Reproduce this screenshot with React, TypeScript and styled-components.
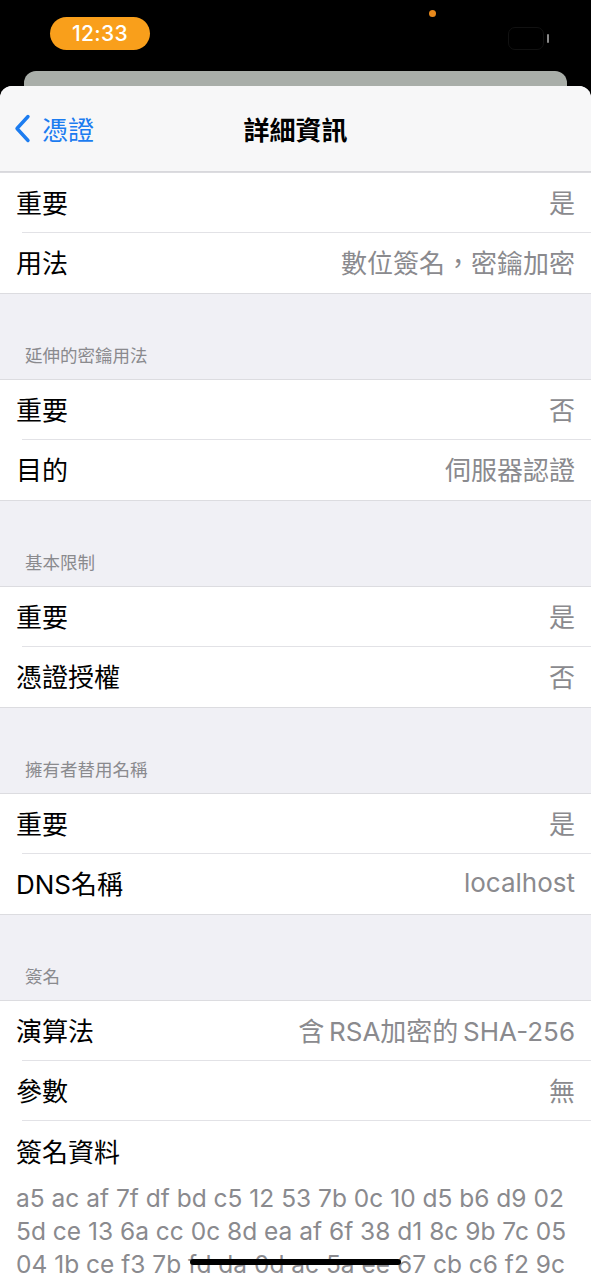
import React from 'react';
import styled, { createGlobalStyle } from 'styled-components';

const GlobalStyle = createGlobalStyle`
  html, body {
    margin: 0;
    padding: 0;
    background: #000;
  }
  body {
    font-family: Inter, 'Noto Sans CJK TC', 'Noto Sans', sans-serif;
    -webkit-font-smoothing: antialiased;
  }
`;

const Screen = styled.div`
  width: 591px;
  height: 1279px;
  overflow: hidden;
  position: relative;
  background: #000;
`;

const StatusBar = styled.div`
  height: 71px;
  position: relative;
  display: flex;
  align-items: flex-start;
  padding: 17px 0 0 50px;
  box-sizing: border-box;
`;

const TimePill = styled.div`
  width: 100px;
  height: 33px;
  border-radius: 17px;
  background: #f99f1b;
  color: #fff;
  font-size: 21px;
  font-weight: 500;
  display: flex;
  align-items: center;
  justify-content: center;
  letter-spacing: 0.3px;
`;

const PrivacyDot = styled.div`
  position: absolute;
  left: 429px;
  top: 10px;
  width: 7px;
  height: 7px;
  border-radius: 50%;
  background: #e8891c;
`;

const Battery = styled.div`
  position: absolute;
  left: 508px;
  top: 27px;
  width: 34px;
  height: 21px;
  border-radius: 7px;
  border: 1px solid #111;
  &::after {
    content: '';
    position: absolute;
    right: -6px;
    top: 6px;
    width: 2px;
    height: 9px;
    border-radius: 1px;
    background: #8a8a8a;
  }
`;

const BackCard = styled.div`
  margin: 0 24px;
  height: 15px;
  background: #a9aea9;
  border-radius: 12px 12px 0 0;
`;

const Sheet = styled.div`
  background: #f0f0f5;
  border-radius: 12px 12px 0 0;
  overflow: hidden;
  height: 1193px;
`;

const NavBar = styled.div`
  height: 86px;
  background: #f7f7f8;
  border-bottom: 1px solid #d8d8dc;
  display: grid;
  grid-template-columns: 1fr auto 1fr;
  align-items: center;
  box-sizing: border-box;
`;

const BackButton = styled.div`
  display: flex;
  align-items: center;
  gap: 11px;
  padding-left: 14px;
  color: #1c7cf0;
  font-size: 26px;
`;

const Title = styled.div`
  font-size: 26px;
  font-weight: 700;
  color: #000;
`;

const Group = styled.div`
  background: #fff;
  border-top: 1px solid #dcdce0;
  border-bottom: 1px solid #dcdce0;
  &:first-of-type {
    border-top: none;
  }
`;

const SectionHeader = styled.div`
  height: 85px;
  box-sizing: border-box;
  padding: 0 0 12px 25px;
  display: flex;
  align-items: flex-end;
  font-size: 17.5px;
  color: #8a8a8e;
`;

const Row = styled.div<{ $last?: boolean }>`
  height: 60px;
  box-sizing: border-box;
  margin-left: 22px;
  padding-right: 16px;
  padding-bottom: 3px;
  display: flex;
  align-items: center;
  justify-content: space-between;
  border-bottom: ${(p) => (p.$last ? 'none' : '1px solid #e2e2e6')};
`;

const Label = styled.div<{ $flush?: boolean }>`
  margin-left: ${(p) => (p.$flush ? '0' : '-6px')};
  font-size: 26px;
  color: #000;
`;

const Value = styled.div`
  font-size: 26px;
  color: #8a8a8e;
`;

const DataRow = styled.div`
  padding: 11px 16px 0 16px;
`;

const DataBlock = styled.div`
  padding: 13px 0 0 0;
  font-size: 24.5px;
  line-height: 33px;
  color: #8a8a8e;
`;

const HomeIndicator = styled.div`
  position: absolute;
  left: 190px;
  bottom: 14px;
  width: 211px;
  height: 6px;
  border-radius: 3px;
  background: #000;
`;

type Item = { label: string; value: string };
type Section = { header?: string; items: Item[] };

const sections: Section[] = [
  {
    items: [
      { label: '重要', value: '是' },
      { label: '用法', value: '數位簽名，密鑰加密' },
    ],
  },
  {
    header: '延伸的密鑰用法',
    items: [
      { label: '重要', value: '否' },
      { label: '目的', value: '伺服器認證' },
    ],
  },
  {
    header: '基本限制',
    items: [
      { label: '重要', value: '是' },
      { label: '憑證授權', value: '否' },
    ],
  },
  {
    header: '擁有者替用名稱',
    items: [
      { label: '重要', value: '是' },
      { label: 'DNS名稱', value: 'localhost' },
    ],
  },
];

const hexLines = [
  'a5 ac af 7f df bd c5 12 53 7b 0c 10 d5 b6 d9 02',
  '5d ce 13 6a cc 0c 8d ea af 6f 38 d1 8c 9b 7c 05',
  '04 1b ce f3 7b fd da 0d ac 5a ee 67 cb c6 f2 9c',
];

function Chevron() {
  return (
    <svg width="17" height="29" viewBox="0 0 17 29" fill="none">
      <path d="M14 2.5L3 14.5L14 26.5" stroke="#1c7cf0" strokeWidth="3.4" strokeLinecap="round" strokeLinejoin="round" />
    </svg>
  );
}

export default function App() {
  return (
    <Screen>
      <GlobalStyle />
      <StatusBar>
        <TimePill>12:33</TimePill>
        <PrivacyDot />
        <Battery />
      </StatusBar>
      <BackCard />
      <Sheet>
        <NavBar>
          <BackButton>
            <Chevron />
            <span>憑證</span>
          </BackButton>
          <Title>詳細資訊</Title>
          <div />
        </NavBar>
        {sections.map((s, i) => (
          <React.Fragment key={i}>
            {s.header && <SectionHeader>{s.header}</SectionHeader>}
            <Group>
              {s.items.map((it, j) => (
                <Row key={j} $last={j === s.items.length - 1}>
                  <Label>{it.label}</Label>
                  <Value>{it.value}</Value>
                </Row>
              ))}
            </Group>
          </React.Fragment>
        ))}
        <SectionHeader>簽名</SectionHeader>
        <Group>
          <Row>
            <Label>演算法</Label>
            <Value>含&thinsp;RSA加密的&thinsp;SHA-256</Value>
          </Row>
          <Row>
            <Label>參數</Label>
            <Value>無</Value>
          </Row>
          <DataRow>
            <Label $flush>簽名資料</Label>
            <DataBlock>
              {hexLines.map((l, i) => (
                <div key={i}>{l}</div>
              ))}
            </DataBlock>
          </DataRow>
        </Group>
      </Sheet>
      <HomeIndicator />
    </Screen>
  );
}
